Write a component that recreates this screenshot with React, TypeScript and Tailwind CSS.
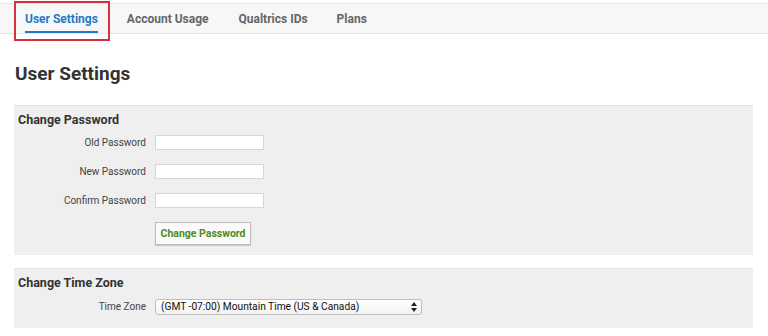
import React from 'react';

const font = { fontFamily: 'Roboto, "Liberation Sans", Arial, sans-serif' };

const Field = ({ label }: { label: string }) => (
  <div className="flex items-center h-[15px]">
    <label className="w-[141px] pr-[9px] text-right text-[10px] text-[#444]">{label}</label>
    <input type="password" className="w-[109px] h-[15px] bg-white border border-[#d6d6d6] outline-none" />
  </div>
);

export default function App() {
  return (
    <div className="w-[768px] h-[336px] bg-white overflow-hidden relative" style={font}>
      {/* Tabs */}
      <div className="mt-[3px] h-[31px] bg-[#f7f7f7] border-y border-[#e6e6e6] flex items-end text-[12px] font-bold text-[#666]">
        <div className="ml-[25px] h-full flex flex-col justify-center relative">
          <span className="text-[#1f7ac9]">User Settings</span>
          <div className="absolute bottom-0 left-0 right-0 h-[2px] bg-[#1f7ac9]" />
        </div>
        <div className="ml-[29px] h-full flex items-center">Account Usage</div>
        <div className="ml-[30px] h-full flex items-center">Qualtrics IDs</div>
        <div className="ml-[29px] h-full flex items-center">Plans</div>
      </div>
      {/* highlight box */}
      <div className="absolute left-[14px] top-[1px] w-[96px] h-[40px] border-2 border-[#d2323c]" />

      <h1 className="ml-[15px] mt-[28px] text-[19px] font-bold text-[#333] leading-[24px]">User Settings</h1>

      <section className="ml-[14px] mt-[19px] w-[739px] h-[150px] bg-[#efefef] border-t border-[#e2e2e2]">
        <h2 className="ml-[4px] pt-[6px] text-[12.5px] font-bold text-[#333] leading-[16px]">Change Password</h2>
        <div className="mt-[7px] flex flex-col gap-[14px]">
          <Field label="Old Password" />
          <Field label="New Password" />
          <Field label="Confirm Password" />
        </div>
        <button className="ml-[141px] mt-[14px] w-[96px] h-[23px] whitespace-nowrap bg-[#fafafa] border border-[#bdbdbd] shadow-[0_1px_1px_rgba(0,0,0,0.15)] text-[10.5px] font-bold text-[#4f8a1c]">
          Change Password
        </button>
      </section>

      <section className="ml-[14px] mt-[13px] w-[739px] h-[60px] bg-[#efefef] border-t border-[#e2e2e2]">
        <h2 className="ml-[4px] pt-[6px] text-[12.5px] font-bold text-[#333] leading-[16px]">Change Time Zone</h2>
        <div className="mt-[8px] flex items-center h-[15px]">
          <label className="w-[141px] pr-[9px] text-right text-[10px] text-[#444]">Time Zone</label>
          <div className="w-[267px] h-[16px] bg-gradient-to-b from-white to-[#f2f2f2] border border-[#bdbdbd] rounded-[3px] flex items-center justify-between pl-[5px] pr-[4px] text-[10.2px] text-[#111]">
            <span>(GMT -07:00) Mountain Time (US &amp; Canada)</span>
            <svg width="6" height="10" viewBox="0 0 6 10">
              <path d="M3 0 L6 4 L0 4 Z" fill="#222" />
              <path d="M0 6 L6 6 L3 10 Z" fill="#222" />
            </svg>
          </div>
        </div>
      </section>
    </div>
  );
}
